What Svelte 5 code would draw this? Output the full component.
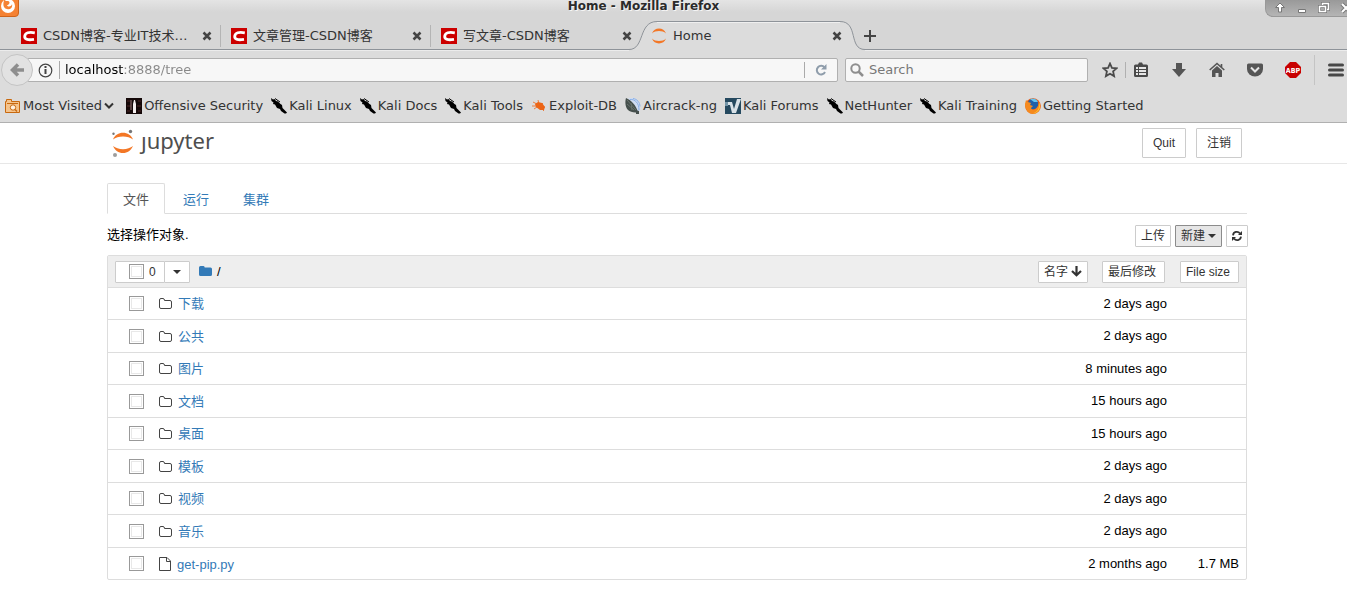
<script>
  const tabs = [
    { title: 'CSDN博客-专业IT技术…', icon: 'csdn' },
    { title: '文章管理-CSDN博客', icon: 'csdn' },
    { title: '写文章-CSDN博客', icon: 'csdn' },
    { title: 'Home', icon: 'jupyter', active: true }
  ]

  const bookmarks = [
    { title: 'Most Visited', icon: 'folder', menu: true },
    { title: 'Offensive Security', icon: 'offsec' },
    { title: 'Kali Linux', icon: 'kali' },
    { title: 'Kali Docs', icon: 'kali' },
    { title: 'Kali Tools', icon: 'kali' },
    { title: 'Exploit-DB', icon: 'exploit' },
    { title: 'Aircrack-ng', icon: 'aircrack' },
    { title: 'Kali Forums', icon: 'forums' },
    { title: 'NetHunter', icon: 'kali' },
    { title: 'Kali Training', icon: 'kali' },
    { title: 'Getting Started', icon: 'firefox' }
  ]

  let files = $state([
    { name: '下载', modified: '2 days ago', checked: false },
    { name: '公共', modified: '2 days ago', checked: false },
    { name: '图片', modified: '8 minutes ago', checked: false },
    { name: '文档', modified: '15 hours ago', checked: false },
    { name: '桌面', modified: '15 hours ago', checked: false },
    { name: '模板', modified: '2 days ago', checked: false },
    { name: '视频', modified: '2 days ago', checked: false },
    { name: '音乐', modified: '2 days ago', checked: false },
    { name: 'get-pip.py', modified: '2 months ago', size: '1.7 MB', file: true, checked: false }
  ])

  let selected = $derived(files.filter((f) => f.checked).length)

  function toggleAll(e) {
    for (const f of files) f.checked = e.target.checked
  }
</script>

{#snippet icon(name)}
  <svg class="ico" viewBox="0 0 16 16" width="16" height="16" aria-hidden="true">
    {#if name === 'csdn'}
      <path fill="#c00" d="M0 0h16v16H0z" />
      <path fill="none" stroke="#fff" stroke-width="2.8" d="M13.8 4.800C8 3.800 4.200 4.600 3.700 8.200c-.3 3.600 3.600 4 9.300 3.200" />
    {:else if name === 'jupyter'}
      <path fill="#f37726" d="M1 5.500C2.200 2.200 4.800.6 8 .6s5.800 1.600 7 4.900C13.200 3.700 10.800 3 8 3S2.800 3.700 1 5.500zM1 10.500c1.200 3.300 3.800 4.900 7 4.900s5.800-1.600 7-4.900c-1.800 1.800-4.200 2.500-7 2.500s-5.200-.7-7-2.500z" />
    {:else if name === 'folder'}
      <path fill="#f5c48c" stroke="#c8690f" d="M.5 14.500v-11h1v-2h5v2h8v11z" />
      <path stroke="#c8690f" d="M2 5.500h11" />
      <circle cx="8" cy="9.500" r="2.700" fill="#fff1df" stroke="#c8690f" />
      <path stroke="#c8690f" stroke-width="1.500" d="M10 11.500l2 2" />
    {:else if name === 'offsec'}
      <path fill="#140808" d="M0 0h16v16H0z" />
      <path stroke="#4c2424" d="M1 3h3M1 8h4M1 13h3M12 3h3M11 8h4M12 13h3" />
      <path fill="#f4eeee" d="M8 2h1l1 4v9H7V6z" />
      <path stroke="#977" d="M5 2v10" />
    {:else if name === 'kali'}
      <path d="M0 0l2 1.500L3.500 1 5 3l2 .5L9.500 6l1.500 1 .5 3 2 2 2.500 2.500-1 1h-1.500L10 13l-1-2-3-1-2-3.500L2 6l.5-1.500L.5 3z" />
      <path stroke="#000" fill="none" d="M4 .500L9 4" />
    {:else if name === 'exploit'}
      <path fill="#ec6516" d="M4 6l3-2 4 1 3 4-1 3-4 0-4-3z" />
      <path stroke="#ec6516" stroke-width=".8" fill="none" d="M2 4l4 2M1 8h4M3 11l3-2M7 2l1 4M12 5l-2 2M11 11l2 2M14 9h-3" />
    {:else if name === 'aircrack'}
      <path fill="#cfdcf2" d="M3 0c8-1 13 4 12 13h-3z" />
      <path fill="none" stroke="#8ab0e8" d="M5 1.500C10 1 14 5 14 12M8 .5c4 .5 7 4 7 8" />
      <path fill="#46504d" d="M1 0c5 2 10 7 12 14-3 1-8 0-10-2C0 9 0 3 1 0zM11 12l3 1v3h-3z" />
      <path stroke="#69736f" fill="none" d="M2 2l9 10M2 6l7 6M6 5l1 7" />
    {:else if name === 'forums'}
      <path fill="#25495f" d="M0 0h16v16H0z" />
      <path fill="#d8e1e7" d="M2 4h5l2 7 3-10h4l-5 14H7L5 7H2z" />
      <path fill="#7495a8" d="M0 4h3v4H0z" />
    {:else if name === 'firefox'}
      <circle cx="8" cy="8" r="7.800" fill="#e65a17" />
      <circle cx="8" cy="6" r="5.300" fill="#1f5fa8" />
      <path fill="#65c5ef" d="M5 1c4-1 7 0 8 3L9 4z" />
      <path fill="#f58a1f" d="M0 6l1-4 2 2 3 1-1 2 3 1-2 2c1 3 5 2 7-2l1-4c4 6-1 12-6 12S0 11 0 6z" />
      <path fill="#ffc62e" d="M14 4c3 6-1 11-6 11.500 5-2 7-6.500 6-11.500z" />
    {/if}
  </svg>
{/snippet}

<div class="browser">
  <header class="titlebar">
    <svg class="applogo" viewBox="0 0 19 17" width="19" height="17" aria-hidden="true">
      <path fill="#f58233" stroke="#cf641b" d="M-2-2h20.500v15q0 3.500-3.500 3.500H-2z" />
      <circle cx="8" cy="6" r="7" fill="#fff" />
      <path fill="#f58233" d="M5-2c0 3 0 3 3 3 3 1 1 4-1 4 1 3 5 1 5-1 1 4-2 6-5 5C2 8 3 2 5-2z" />
    </svg>
    <span class="title">Home - Mozilla Firefox</span>
    <div class="window-buttons">
      <button aria-label="Keep on top">
        <svg width="12" height="12" viewBox="0 0 12 12"><path fill="#fff" stroke="#777" d="M6 1l4.500 4.500H7.500V10h-3V5.500h-3z" /></svg>
      </button>
      <button aria-label="Minimize">
        <svg width="12" height="12" viewBox="0 0 12 12"><path fill="#fff" stroke="#777" d="M2.500 7.500h7v3h-7z" /></svg>
      </button>
      <button aria-label="Restore">
        <svg width="12" height="12" viewBox="0 0 12 12"><path fill="none" stroke="#777" stroke-width="3" d="M4.500 3V1.500h6v6H9M1.500 4.500h6v5h-6z" /><path fill="none" stroke="#fff" stroke-width="1.500" d="M4.500 3V1.500h6v6H9M1.500 4.500h6v5h-6z" /></svg>
      </button>
      <button aria-label="Close">
        <svg width="12" height="12" viewBox="0 0 12 12"><path stroke="#777" stroke-width="4" d="M2 2l8 8M10 2l-8 8" /><path stroke="#fff" stroke-width="2" d="M2 2l8 8M10 2l-8 8" /></svg>
      </button>
    </div>
  </header>

  <nav class="tabstrip">
    {#each tabs as tab}
      <div class="tab" class:active={tab.active}>
        {#if tab.active}
          <svg class="tab-shape" width="236" height="30" viewBox="0 0 236 30" aria-hidden="true">
            <path fill="#dcdcdc" d="M0 30v-1.500C16 28.500 9 .5 28 .5h183c19 0 8 28 25 28V30z" />
            <path fill="none" stroke="#8e9399" d="M0 28.500C16 28.500 9 .5 28 .5h183c19 0 8 28 25 28" />
            <path fill="none" stroke="#efefef" d="M28 1.500h183" />
          </svg>
        {/if}
        <button class="tab-title">{@render icon(tab.icon)}<span>{tab.title}</span></button>
        <button class="close" aria-label="Close tab">
          <svg width="10" height="10" viewBox="0 0 10 10"><path stroke="#444" stroke-width="2.500" d="M1.500 1.500l7 7M8.500 1.500l-7 7" /></svg>
        </button>
      </div>
    {/each}
    <button class="newtab" aria-label="New tab">
      <svg width="12" height="12" viewBox="0 0 12 12"><path stroke="#444" stroke-width="2" d="M6 0v12M0 6h12" /></svg>
    </button>
  </nav>

  <div class="navbar">
    <button class="back" aria-label="Back">
      <svg width="14" height="14" viewBox="0 0 14 14"><path fill="none" stroke="#8e8e8e" stroke-width="3.500" d="M8 1.500L2.500 7 8 12.500M3 7h11" /></svg>
    </button>
    <div class="urlbar">
      <svg class="info" width="15" height="15" viewBox="0 0 15 15" aria-hidden="true"><circle cx="7.500" cy="7.500" r="6.300" fill="none" stroke="#444" stroke-width="1.200" /><path stroke="#444" stroke-width="2" d="M7.500 3v2M7.500 6v5" /></svg>
      <input class="url" aria-label="Address" value="localhost:8888/tree" />
      <button class="reload" aria-label="Reload">
        <svg width="12" height="12" viewBox="0 0 12 12"><path fill="none" stroke="#8f9dab" stroke-width="2" d="M9.500 3.500A4.300 4.300 0 1 0 10 8" /><path fill="#8f9dab" d="M11.500 0v5.500H6z" /></svg>
      </button>
    </div>
    <div class="search">
      <svg width="14" height="14" viewBox="0 0 14 14" aria-hidden="true"><circle cx="5.500" cy="5.500" r="4.200" fill="none" stroke="#8e8e8e" stroke-width="2" /><path stroke="#8e8e8e" stroke-width="2.500" d="M8.500 8.500L13 13" /></svg>
      <input aria-label="Search" placeholder="Search" />
    </div>
    <div class="tools">
      <button class="star" aria-label="Bookmark this page">
        <svg width="16" height="16" viewBox="0 0 16 16"><path fill="none" stroke="#4a4a4a" stroke-width="1.800" d="M8 1.500l1.900 4.300 4.700.5-3.500 3.100 1 4.700L8 11.700l-4.100 2.400 1-4.700L1.400 6.300l4.700-.5z" /></svg>
      </button>
      <button class="library" aria-label="Show bookmarks">
        <svg width="16" height="16" viewBox="0 0 16 16"><path fill="#4a4a4a" d="M1 4q0-1.500 1.500-1.500H5L6 .5h3l1 2h3.500Q15 2.500 15 4v9.500q0 1.500-1.500 1.500h-11Q1 15 1 13.500z" /><path stroke="#e6e6e6" stroke-width="2" d="M3 6h2M6 6h7M3 9h2M6 9h7M3 12h2M6 12h7" /></svg>
      </button>
      <button aria-label="Downloads">
        <svg width="16" height="16" viewBox="0 0 16 16"><path fill="#555" d="M5 1h6v6h4l-7 8-7-8h4z" /></svg>
      </button>
      <button aria-label="Home page">
        <svg width="16" height="16" viewBox="0 0 16 16"><path fill="none" stroke="#555" stroke-width="1.600" d="M.7 8L8 1.500 15.300 8M12.500 2v3" /><path fill="#555" d="M3 8.500l5-4.500 5 4.500V15H9.500v-4h-3v4H3z" /></svg>
      </button>
      <button aria-label="Pocket">
        <svg width="16" height="16" viewBox="0 0 16 16"><path fill="#555" d="M1.500 1.500h13q1.500 0 1.500 1.500v4a8 7.500 0 0 1-16 0V3q0-1.500 1.500-1.500z" /><path fill="none" stroke="#e4e4e4" stroke-width="2" d="M4 5.500l4 4 4-4" /></svg>
      </button>
      <button aria-label="Adblock Plus">
        <svg class="abp" width="16" height="16" viewBox="0 0 16 16"><path fill="#c80000" d="M5 0h6l5 5v6l-5 5H5l-5-5V5z" /><text x="8" y="11" text-anchor="middle">ABP</text></svg>
      </button>
      <button class="menu" aria-label="Open menu">
        <svg width="16" height="14" viewBox="0 0 16 14"><path stroke="#484848" stroke-width="3" stroke-linecap="round" d="M1.500 2h13M1.500 7h13M1.500 12h13" /></svg>
      </button>
    </div>
  </div>

  <nav class="bookmarks">
    {#each bookmarks as b}
      <a class:has-menu={b.menu} href="#bookmark">
        {@render icon(b.icon)}<span>{b.title}</span>
        {#if b.menu}
          <svg class="chev" width="10" height="8" viewBox="0 0 10 8" aria-hidden="true"><path fill="none" stroke="#333" stroke-width="2" d="M1 1.500l4 4 4-4" /></svg>
        {/if}
      </a>
    {/each}
  </nav>
</div>

<main>
  <header class="nb-header">
    <div class="container head">
      <a class="brand" href="#tree" aria-label="jupyter">
        <svg width="22" height="28" viewBox="0 0 22 28" aria-hidden="true">
          <path fill="#f37726" d="M1 10.500C3 6 6.500 3.800 11 3.800s8 2.200 10 6.700C18.500 8.600 15 7.500 11 7.500S3.500 8.600 1 10.500zM1 17c2 4.500 5.500 7 10 7s8-2.500 10-7c-2.500 2-6 3.200-10 3.200S3.500 19 1 17z" />
          <circle cx="18.500" cy="2.500" r="1.700" fill="#767677" />
          <circle cx="1.500" cy="4.700" r="1.200" fill="#767677" />
          <circle cx="3" cy="26" r="2" fill="#9e9e9e" />
        </svg>
        <span>ȷupyter</span>
      </a>
      <div class="session">
        <button class="btn">Quit</button>
        <button class="btn">注销</button>
      </div>
    </div>
  </header>

  <div class="container">
    <ul class="nav-tabs">
      <li class="active"><a href="#notebooks">文件</a></li>
      <li><a href="#running">运行</a></li>
      <li><a href="#clusters">集群</a></li>
    </ul>

    <div class="toolbar">
      <span>选择操作对象.</span>
      <div class="actions">
        <button class="btn xs">上传</button>
        <button class="btn xs new">新建<i class="caret"></i></button>
        <button class="btn xs" aria-label="Refresh">
          <svg width="10" height="12" viewBox="0 0 10 12"><path fill="none" stroke="#333" stroke-width="1.800" d="M1 5.300C1.500 1.500 6 .8 8 3.500M9 6.700c-.5 3.800-5 4.500-7 1.800" /><path fill="#333" d="M10 1v4H6zM0 11V7h4z" /></svg>
        </button>
      </div>
    </div>

    <div class="list">
      <table>
        <colgroup>
          <col class="col-check" />
          <col />
          <col class="col-modified" />
          <col class="col-size" />
        </colgroup>
        <thead>
          <tr>
            <th colspan="2">
              <div class="list-head">
                <div class="group">
                  <label class="btn xs all">
                    <input type="checkbox" aria-label="Select all" onchange={toggleAll} />{selected}
                  </label>
                  <button class="btn xs drop" aria-label="Select by type"><i class="caret"></i></button>
                </div>
                <a class="crumb" href="#root" aria-label="Root folder">
                  <svg width="13" height="12" viewBox="0 0 13 12"><path fill="#337ab7" d="M1.500 0h3q1.200 0 1.200 1.500h5.800q1.500 0 1.500 1.500v5.500q0 1.500-1.500 1.500h-10Q0 10 0 8.500v-7Q0 0 1.500 0z" /></svg>
                </a>
                <span class="slash">/</span>
                <button class="btn xs by-name">
                  名字
                  <svg width="11" height="11" viewBox="0 0 11 11" aria-hidden="true"><path fill="none" stroke="#333" stroke-width="2.200" d="M5.500 0v9M1 5l4.500 4.300L10 5" /></svg>
                </button>
              </div>
            </th>
            <th class="modified"><button class="btn xs sort">最后修改</button></th>
            <th class="size"><button class="btn xs sort">File size</button></th>
          </tr>
        </thead>
        <tbody>
          {#each files as f}
            <tr>
              <td class="check"><input type="checkbox" aria-label={f.name} bind:checked={f.checked} /></td>
              <td>
                <a class="item" class:file={f.file} href="#item">
                  {#if f.file}
                    <svg width="13" height="16" viewBox="0 0 13 16" aria-hidden="true"><path fill="none" stroke="#444" d="M.5.5h7.500l3.500 3.500v9.500H.5zM7.500.5v4h4" /></svg>
                  {:else}
                    <svg width="14" height="12" viewBox="0 0 14 12" aria-hidden="true"><path fill="none" stroke="#444" d="M.5 2q0-1.500 1.500-1.500h2Q5.500.5 5.500 2.500H11q1.500 0 1.500 1.500v5q0 1.500-1.500 1.500H2Q.5 10.500.5 9z" /></svg>
                  {/if}
                  {f.name}
                </a>
              </td>
              <td class="modified">{f.modified}</td>
              <td class="size">{f.size ?? ''}</td>
            </tr>
          {/each}
        </tbody>
      </table>
    </div>
  </div>
</main>

<style>
  :global(body) { background: #fff; }
  button { font: inherit; color: inherit; border: 0; padding: 0; background: none; cursor: pointer; }
  input { font: inherit; margin: 0; }
  a { text-decoration: none; }
  svg { display: block; flex: none; }

  .browser {
    font: 13px/18px "DejaVu Sans", "Noto Sans CJK SC", sans-serif;
    color: #333;
    background: #dcdcdc;
    border-bottom: 1px solid #b0b0b0;
    overflow: hidden;
  }
  .titlebar {
    display: grid;
    grid-template-columns: 22px 1fr 82px;
    align-items: start;
    height: 19px;
    background: linear-gradient(#e4e4e4, #d6d6d6 12px);
  }
  .title {
    font-size: 12px;
    font-weight: bold;
    line-height: 12px;
    text-align: center;
    color: #2b2b2b;
    text-shadow: 1px 1px 0 #f5f5f5;
  }
  .window-buttons {
    display: flex;
    gap: 10px;
    height: 17px;
    padding-left: 8px;
    box-sizing: border-box;
    overflow: hidden;
    background: linear-gradient(#999, #b5b5b5);
    border: solid #999;
    border-width: 0 0 1px 1px;
    border-radius: 0 0 0 8px;
  }

  .tabstrip {
    display: flex;
    height: 30px;
    padding-left: 11px;
    background: #d6d6d6;
    border-bottom: 1px solid #8e9399;
  }
  .tab {
    position: relative;
    display: flex;
    flex: 0 1 210px;
    align-items: center;
    box-sizing: border-box;
    padding: 4px 9px 0 10px;
    background: linear-gradient(#b4b4b4, #b4b4b4) right 6px / 1px 22px no-repeat;
  }
  .tab:nth-child(3), .tab.active { background: none; }
  .tab-shape { position: absolute; left: -12px; top: 2px; }
  .tab-title {
    position: relative;
    display: flex;
    align-items: center;
    flex: 1;
    gap: 6px;
    min-width: 0;
    white-space: nowrap;
    overflow: hidden;
  }
  .close { position: relative; }
  .newtab { padding: 4px 13px 0; position: relative; }

  .navbar { display: flex; align-items: center; height: 39px; border-top: 1px solid #ececec; box-sizing: border-box; }
  .back {
    position: relative;
    display: grid;
    place-items: center;
    width: 32px;
    height: 32px;
    margin-left: 1px;
    box-sizing: border-box;
    border: 1px solid #c4c4c4;
    border-radius: 50%;
    background: #e2e2e2;
  }
  .urlbar, .search {
    display: flex;
    align-items: center;
    height: 24px;
    box-sizing: border-box;
    background: #f7f7f7;
    border: 1px solid #b0b0b0;
    border-radius: 2px;
  }
  .urlbar { flex: 1; margin-left: -6px; padding-left: 10px; }
  .url {
    flex: 1;
    min-width: 0;
    height: 18px;
    margin-left: 6px;
    padding: 0 0 0 5px;
    border: 0;
    border-left: 1px solid #aaa;
    background: linear-gradient(90deg, #000 64px, #888 64px);
    background-clip: text;
    color: transparent;
    outline: 0;
  }
  .reload { padding: 2px 10px; border-left: 1px solid #aaa; }
  .search { flex: 0 1 243px; gap: 5px; margin-left: 7px; padding-left: 4px; }
  .search input { flex: 1; min-width: 0; height: 18px; border: 0; padding: 0; background: none; outline: 0; }
  .search input::placeholder { color: #777; opacity: 1; }
  .tools { display: flex; align-items: center; gap: 22px; padding-left: 14px; }
  .star { padding-right: 7px; margin-right: -15px; border-right: 1px solid #b0b0b0; }
  .abp text { font: bold 7px "DejaVu Sans Condensed", sans-serif; fill: #fff; }
  .menu { padding: 8px 3px 8px 13px; margin-left: -9px; border-left: 1px solid #c4c4c4; }

  .bookmarks { display: flex; gap: 8px; height: 33px; align-items: center; padding-left: 5px; overflow: hidden; }
  .bookmarks a { display: flex; align-items: center; gap: 2px; color: #333; white-space: nowrap; }
  .bookmarks .has-menu { margin-right: 4px; }

  main {
    font: 13px/18px "Liberation Sans", "Noto Sans CJK SC", sans-serif;
    color: #000;
    padding-bottom: 16px;
  }
  .container { max-width: 1140px; margin: 0 auto; }
  .nb-header { border-bottom: 1px solid #e7e7e7; }
  .nb-header, .nb-header + .container { padding-left: 7px; }
  .head { display: flex; justify-content: space-between; align-items: center; height: 40px; box-sizing: border-box; padding: 0 5px; }
  .brand { display: flex; align-items: center; gap: 7px; color: #4e4e4e; font: 22px/24px "Noto Sans", "Open Sans", sans-serif; }
  .brand span { padding-bottom: 6px; }
  .session { display: flex; gap: 10px; }
  .btn {
    display: inline-flex;
    align-items: center;
    height: 30px;
    box-sizing: border-box;
    padding: 0 10px;
    border: 1px solid #ccc;
    border-radius: 1px;
    background: #fff;
    color: #333;
    font-size: 12px;
    line-height: 18px;
    font-weight: normal;
    white-space: nowrap;
  }
  .btn.xs { height: 22px; padding: 0 5px; }
  .caret { border: 4px solid transparent; border-top-color: #333; border-bottom: 0; }

  .nav-tabs { display: flex; gap: 2px; list-style: none; margin: 19px 0 0; padding: 0; border-bottom: 1px solid #ddd; }
  .nav-tabs a {
    display: block;
    padding: 7px 15px 4px;
    margin-bottom: -1px;
    border: 1px solid transparent;
    border-radius: 2px 2px 0 0;
    color: #337ab7;
  }
  .nav-tabs .active a { color: #555; background: #fff; border-color: #ddd #ddd #fff; }

  .toolbar { display: flex; justify-content: space-between; padding: 11px 0 8px; margin-right: -1px; line-height: 20px; }
  .actions { display: flex; gap: 4px; }
  .new { gap: 3px; background: #e6e6e6; border-color: #8c8c8c; }

  .list { border: 1px solid #ddd; border-radius: 2px; }
  table { width: 100%; table-layout: fixed; border-collapse: separate; border-spacing: 0; }
  .col-check { width: 51px; }
  .col-modified { width: 95px; }
  .col-size { width: 71px; }
  th, td { height: 31px; padding: 0; border-bottom: 1px solid #ddd; text-align: left; font-weight: normal; }
  th { background: #eee; }
  tbody tr:nth-child(even) td { height: 32px; }
  tbody tr:last-child td { border-bottom: 0; }
  .list-head { display: flex; align-items: center; padding-left: 7px; margin-right: -8px; }
  .group { display: flex; }
  .btn.all { gap: 5px; width: 50px; padding-left: 13px; }
  .drop { width: 26px; justify-content: center; margin-left: -1px; }
  .crumb { margin-left: 9px; }
  .slash { margin-left: 5px; color: #000; }
  .by-name { gap: 3px; margin-left: auto; }
  .btn.sort { padding-right: 8px; vertical-align: middle; }
  input[type="checkbox"] {
    appearance: none;
    flex: none;
    display: block;
    width: 15px;
    height: 15px;
    border: 1px solid #999;
    background: #fff;
    box-shadow: inset 0 0 0 1px #fff, inset 0 0 0 2px #e8e8e8;
  }
  input[type="checkbox"]:checked { background: #337ab7; }
  .check input { margin-left: 21px; }
  .item { display: flex; align-items: center; gap: 5px; padding-top: 1px; color: #337ab7; }
  .item.file { padding-top: 2px; }
  .modified { padding-right: 8px; text-align: right; white-space: nowrap; }
  th.modified { padding-right: 10px; }
  .size { padding-right: 7px; text-align: right; white-space: nowrap; }
</style>
